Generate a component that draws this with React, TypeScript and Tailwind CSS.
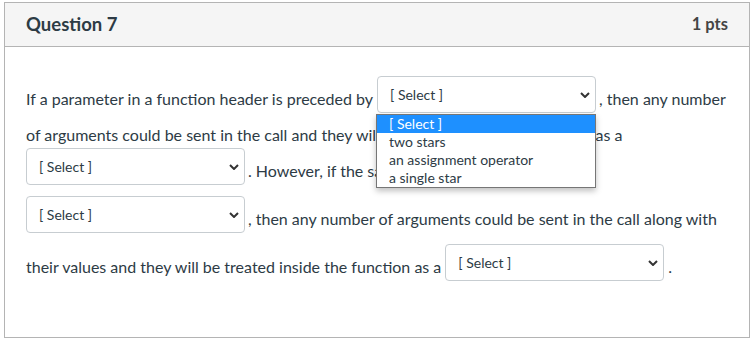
import React from "react";

function Chevron() {
  return (
    <svg width="10" height="6" viewBox="0 0 10 6" className="shrink-0">
      <path d="M1 1 L5 5 L9 1" fill="none" stroke="#333" strokeWidth="2" />
    </svg>
  );
}

function FakeSelect() {
  return (
    <div className="w-[219px] h-[37px] shrink-0 rounded-[4px] border border-[#c7cdd1] bg-white flex items-center justify-between pl-[12px] pr-[5px] text-[14px] text-[#2d3b45]">
      <span>[ Select ]</span>
      <Chevron />
    </div>
  );
}

const options = ["[ Select ]", "two stars", "an assignment operator", "a single star"];

export default function App() {
  return (
    <div
      className="w-[756px] h-[342px] bg-white pt-[2px] pl-[4px] text-[#2d3b45]"
      style={{ fontFamily: "Lato, 'Liberation Sans', sans-serif" }}
    >
      <div className="w-[746px] h-[336px] border border-[#b4b4b4]">
        <div className="h-[44px] bg-[#f5f5f5] border-b border-[#b4b4b4] flex items-center justify-between px-[21px]">
          <h2 className="text-[18.5px] font-bold">Question 7</h2>
          <span className="text-[16.5px] font-bold text-[#444]">1 pts</span>
        </div>

        <div className="relative pl-[21px] pt-[29px] text-[16px]">
          <div className="flex items-start">
            <span className="mt-[11px] leading-6 mr-[4px]">If a parameter in a function header is preceded by</span>
            <div className="relative">
              <FakeSelect />
              <div className="absolute left-[-1px] top-[38px] w-[220px] border border-[#767676] bg-white shadow-[0_3px_6px_rgba(0,0,0,0.25)] z-10 text-[14px]">
                {options.map((o, i) => (
                  <div
                    key={o}
                    className={`h-[18px] leading-[18px] pl-[12px] ${i === 0 ? "bg-[#1e90ff] text-white" : "text-[#2d3b45]"}`}
                  >
                    {o}
                  </div>
                ))}
              </div>
            </div>
            <span className="mt-[11px] leading-6 ml-[3px]">, then any number</span>
          </div>

          <div className="mt-[10px] leading-6">
            of arguments could be sent in the call and they will be treated inside the function as a
          </div>

          <div className="flex items-start mt-[1px]">
            <FakeSelect />
            <span className="mt-[11px] leading-6 ml-[3px]">. However, if the same parameter is preceded by</span>
          </div>

          <div className="flex items-start mt-[11px]">
            <FakeSelect />
            <span className="mt-[11px] leading-6 ml-[3px]">, then any number of arguments could be sent in the call along with</span>
          </div>

          <div className="flex items-start mt-[11px]">
            <span className="mt-[11px] leading-6 mr-[4px]">their values and they will be treated inside the function as a</span>
            <FakeSelect />
            <span className="mt-[11px] leading-6 ml-[4px]">.</span>
          </div>
        </div>
      </div>
    </div>
  );
}
